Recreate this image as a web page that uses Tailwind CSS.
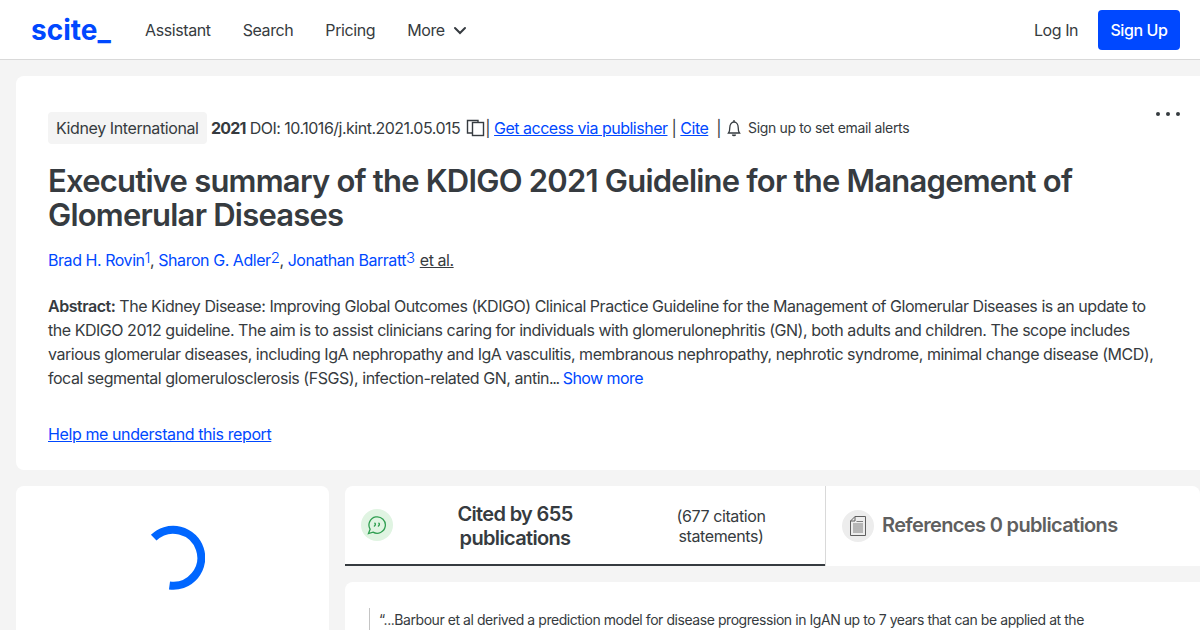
<!DOCTYPE html>
<html><head><meta charset="utf-8"><script src="https://cdn.jsdelivr.net/npm/@tailwindcss/browser@4"></script></head>
<body class="w-[1200px] h-[630px] overflow-hidden bg-[#f4f4f4] font-['Inter',sans-serif] text-[#363b40]">
<header class="h-[60px] bg-white border-b border-[#d9d9d9] flex items-center pl-[31px] pr-5">
  <div class="w-[82px] text-[#0048ff] font-bold text-[28px] leading-none mr-8">scite_</div>
  <nav class="flex items-center gap-8 text-base tracking-[-0.4px]">
    <span>Assistant</span><span>Search</span><span>Pricing</span>
    <span class="flex items-center gap-2">More
      <svg width="14" height="14" viewBox="0 0 14 14" fill="none" stroke="#363b40" stroke-width="2" stroke-linecap="round"><path d="M2 5l5 5 5-5"/></svg></span>
  </nav>
  <div class="ml-auto flex items-center gap-5">
    <span class="text-base tracking-[-0.45px]">Log In</span>
    <span class="w-[82px] h-10 bg-[#0048ff] text-white rounded flex items-center justify-center font-medium text-base tracking-[-0.4px]">Sign Up</span>
  </div>
</header>
<main class="pl-4 pt-4 flex flex-col gap-4">
  <section class="relative bg-white rounded-l-lg h-[394px] pl-8 pr-9 pt-9">
    <div class="absolute right-5 top-[36px] flex gap-1.5">
      <i class="w-1 h-1 rounded-full bg-[#363b40]"></i><i class="w-1 h-1 rounded-full bg-[#363b40]"></i><i class="w-1 h-1 rounded-full bg-[#363b40]"></i>
    </div>
    <div class="flex items-center h-8 text-base tracking-[-0.5px] whitespace-pre">
      <span class="bg-[#f4f4f4] rounded h-8 w-[159px] px-2 flex items-center mr-1 tracking-[-0.4px]">Kidney International</span>
      <b class="font-bold tracking-[-0.8px]">2021</b><span> DOI: 10.1016/j.kint.2021.05.015 </span>
      <svg class="ml-[1px]" width="20" height="20" viewBox="0 0 20 20" fill="none" stroke="#363b40" stroke-width="1.400"><path d="M7.500 15H2.500V2.500H13V4.500"/><rect x="7.500" y="4.500" width="11" height="13"/></svg>
      <span>| </span><a class="text-[#0048ff] underline">Get access via publisher</a><span> | </span><a class="text-[#0048ff] underline">Cite</a><span class="ml-[8px] mr-[6px]">|</span>
      <svg width="14" height="18" viewBox="0 0 14 18" fill="none" stroke="#363b40" stroke-width="1.300"><path d="M7 1v2"/><path d="M1.500 14c.9-1.200 1.300-2.600 1.300-5.500C2.800 5.500 4.600 3 7 3s4.200 2.500 4.200 5.500c0 2.900.4 4.300 1.300 5.500H1.500z"/><path d="M5.500 15.500c.4 1.300 2.600 1.300 3 0" stroke-width="1.500"/></svg>
      <span class="ml-[7px] text-sm tracking-[-0.35px]">Sign up to set email alerts</span>
    </div>
    <h1 class="mt-[20px] pr-3 font-semibold text-[31px] leading-[34px] tracking-[-0.78px]">Executive summary of the KDIGO 2021 Guideline for the Management of Glomerular Diseases</h1>
    <p class="mt-[16px] text-base leading-6 tracking-[-0.45px]"><a class="text-[#0048ff]">Brad H. Rovin<sup class="text-[15px] font-light top-[-3px]">1</sup></a>, <a class="text-[#0048ff]">Sharon G. Adler<sup class="text-[15px] font-light top-[-3px]">2</sup></a>, <a class="text-[#0048ff]">Jonathan Barratt<sup class="text-[15px] font-light top-[-3px]">3</sup></a> <span class="underline ml-[1px]">et al.</span></p>
    <p class="mt-[22px] text-base leading-6 tracking-[-0.47px]"><b class="font-semibold">Abstract:</b> The Kidney Disease: Improving Global Outcomes (KDIGO) Clinical Practice Guideline for the Management of Glomerular Diseases is an update to the KDIGO 2012 guideline. The aim is to assist clinicians caring for individuals with glomerulonephritis (GN), both adults and children. The scope includes various glomerular diseases, including IgA nephropathy and IgA vasculitis, membranous nephropathy, nephrotic syndrome, minimal change disease (MCD), focal segmental glomerulosclerosis (FSGS), infection-related GN, antin<span class="tracking-[-1.4px]">...</span> <a class="text-[#0048ff] tracking-[-0.55px]">Show more</a></p>
    <a class="block mt-8 text-[#0048ff] underline text-base leading-6 tracking-[-0.4px]">Help me understand this report</a>
  </section>
  <section class="flex gap-4 items-start">
    <div class="w-[313px] h-[200px] bg-white rounded-lg flex justify-center pt-[39px] pr-[1px] shrink-0">
      <svg width="66" height="66" viewBox="0 0 66 66" fill="none" stroke="#0066ff" stroke-width="8"><path d="M14.700 12.700A28 28 0 1 1 30.500 60.500"/></svg>
    </div>
    <div class="flex-1 flex flex-col gap-4">
      <div class="flex h-20 bg-white rounded-t-lg">
        <div class="w-[480px] border-b-2 border-[#363b40] flex items-center pl-4">
          <span class="w-8 h-8 rounded-full bg-[#e0f4e2] flex items-center justify-center shrink-0">
            <svg width="20" height="20" viewBox="0 0 20 20" fill="none" stroke="#2f9e50" stroke-width="1.300"><path d="M1.500 18.500l1.600-4.300A8.200 8.200 0 1 1 6 17.100L1.500 18.500z"/><path d="M7.800 8.200c.9.300.7 2-.4 2.800M11.800 8.200c.9.300.7 2-.4 2.800" stroke-linecap="round" stroke-width="1.400"/></svg>
          </span>
          <div class="w-[180px] text-center font-semibold text-xl leading-6 tracking-[-0.65px] ml-[32px] mt-[2px]">Cited by 655 publications</div>
          <div class="w-[120px] ml-[56px] text-center text-base leading-5 tracking-[-0.4px] mt-[2px]">(677 citation statements)</div>
        </div>
        <div class="flex-1 border-l border-[#d9d9d9] flex items-center pl-4 text-[#5f5f5f]">
          <span class="w-8 h-8 rounded-full bg-[#ededed] flex items-center justify-center shrink-0">
            <svg width="18" height="20" viewBox="0 0 18 20" fill="none" stroke="#5f5f5f" stroke-width="1"><path d="M6 .5H16.500V19.500H1.500V5z"/><path d="M6 .5V5H1.500"/><path stroke="#808080" d="M7.500 5.500h6.500M4 8h10M4 10h10M4 12h10M4 14h10M4 16h10"/></svg>
          </span>
          <span class="ml-2 font-semibold text-xl tracking-[-0.65px] mb-[2px]">References 0 publications</span>
        </div>
      </div>
      <div class="bg-white rounded-tl-lg h-[60px] pl-6 pt-[26px]">
        <div class="border-l border-[#c4c4c4] pl-[9px] text-sm leading-6 tracking-[-0.44px] h-[40px]">“...Barbour et al derived a prediction model for disease progression in IgAN up to 7 years that can be applied at the</div>
      </div>
    </div>
  </section>
</main>
</body></html>
